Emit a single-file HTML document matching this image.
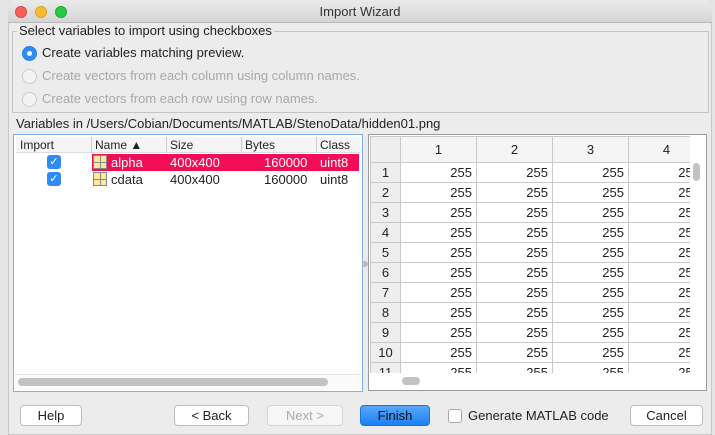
<!DOCTYPE html>
<html><head><style>
*{box-sizing:border-box;margin:0;padding:0}
body{width:715px;height:435px;background:#e4e4e4;font-family:"Liberation Sans",sans-serif;font-size:13px;color:#222;position:relative;overflow:hidden}
.abs{position:absolute}
.win{left:8px;top:0;width:704px;height:435px;background:#ececec;border:1px solid #c8c8c8;border-radius:5px 5px 0 0}
.title{left:8px;top:0;width:704px;height:23px;background:linear-gradient(#ebebeb,#d5d5d5);border-bottom:1px solid #b8b8b8;border-radius:5px 5px 0 0;text-align:center;line-height:23px;font-size:13px;color:#333}
.dot{width:12px;height:12px;border-radius:50%;top:6px}
.radio{width:15px;height:15px;border-radius:50%;border:1px solid #ccc;background:#f3f3f3;left:22px}
.rt{left:42px;font-size:13px}
.btn{height:21px;top:405px;background:#fff;border:1px solid #bdbdbd;border-radius:4px;text-align:center;line-height:19px;font-size:13px}
.cb{width:14px;height:14px;border-radius:3px;background:#2f8cf5;color:#fff;font-size:11px;text-align:center;line-height:14px;left:47px}
.grid{width:14px;height:14px;border:1px solid #888;background:linear-gradient(90deg,transparent 6px,#888 6px,#888 7px,transparent 7px),linear-gradient(transparent 6px,#888 6px,#888 7px,transparent 7px),#fbe99a;left:93px}
table{border-collapse:collapse;table-layout:fixed;width:334px}
td{border:1px solid #c9c9c9;height:20px;font-size:13px;text-align:right;padding-right:4px;width:76px;overflow:hidden;white-space:nowrap}
td.h{background:#eeeeee;text-align:center;width:30px;padding:0}
</style></head><body>
<div class="abs win"></div>
<div class="abs title">Import Wizard</div>
<div class="abs dot" style="left:15px;background:#fc5f57;border:1px solid #e0443e"></div>
<div class="abs dot" style="left:35px;background:#fdbc2e;border:1px solid #dea123"></div>
<div class="abs dot" style="left:55px;background:#28c840;border:1px solid #1aab29"></div>

<div class="abs" style="left:12px;top:31px;width:697px;height:82px;border:1px solid #c4c4c4"></div>
<div class="abs" style="left:17px;top:23px;background:#ececec;padding:0 2px;font-size:13px">Select variables to import using checkboxes</div>
<div class="abs radio" style="top:46px;background:#2f8cf5;border-color:#2a7fe0"><div class="abs" style="left:4px;top:4px;width:5px;height:5px;border-radius:50%;background:#fff"></div></div>
<div class="abs rt" style="top:45px">Create variables matching preview.</div>
<div class="abs radio" style="top:69px"></div>
<div class="abs rt" style="top:68px;color:#a8a8a8">Create vectors from each column using column names.</div>
<div class="abs radio" style="top:92px"></div>
<div class="abs rt" style="top:91px;color:#a8a8a8">Create vectors from each row using row names.</div>

<div class="abs" style="left:16px;top:116px;font-size:13px">Variables in /Users/Cobian/Documents/MATLAB/StenoData/hidden01.png</div>

<div class="abs" style="left:13px;top:134px;width:350px;height:258px;border:1px solid #7fb0e8;background:#fff"></div>
<div class="abs" style="left:16px;top:137px;width:344px;height:16px;background:#f5f5f5;border-bottom:1px solid #ddd;font-size:12px">
<span class="abs" style="left:4px;top:1px">Import</span>
<span class="abs" style="left:75px;top:0;height:15px;border-left:1px solid #ccc"></span>
<span class="abs" style="left:79px;top:1px">Name ▲</span>
<span class="abs" style="left:150px;top:0;height:15px;border-left:1px solid #ccc"></span>
<span class="abs" style="left:154px;top:1px">Size</span>
<span class="abs" style="left:225px;top:0;height:15px;border-left:1px solid #ccc"></span>
<span class="abs" style="left:229px;top:1px">Bytes</span>
<span class="abs" style="left:300px;top:0;height:15px;border-left:1px solid #ccc"></span>
<span class="abs" style="left:304px;top:1px">Class</span>
</div>
<div class="abs" style="left:92px;top:154px;width:267px;height:17px;background:#f20d57"></div>
<div class="abs cb" style="top:155px">✓</div>
<div class="abs cb" style="top:172px">✓</div>
<div class="abs grid" style="top:155px"></div>
<div class="abs grid" style="top:172px"></div>
<div class="abs" style="left:111px;top:155px;color:#fff">alpha</div>
<div class="abs" style="left:170px;top:155px;color:#fff">400x400</div>
<div class="abs" style="left:264px;top:155px;color:#fff">160000</div>
<div class="abs" style="left:320px;top:155px;color:#fff">uint8</div>
<div class="abs" style="left:111px;top:172px">cdata</div>
<div class="abs" style="left:170px;top:172px">400x400</div>
<div class="abs" style="left:264px;top:172px">160000</div>
<div class="abs" style="left:320px;top:172px">uint8</div>
<div class="abs" style="left:15px;top:374px;width:346px;height:16px;background:#fafafa;border-top:1px solid #e4e4e4"></div>
<div class="abs" style="left:18px;top:378px;width:310px;height:8px;border-radius:4px;background:#c2c2c2"></div>

<div class="abs" style="left:362px;top:261px;width:6px;height:6px;border-radius:50%;background:#bbb"></div>

<div class="abs" style="left:368px;top:134px;width:339px;height:257px;border:1px solid #9a9a9a;background:#fff;overflow:hidden">
<div class="abs" style="left:1px;top:1px;width:320px;overflow:hidden;height:237px">
<table style="position:absolute;left:0;top:0">
<tr style="background:#f5f5f5"><td class="h" style="height:26px"></td><td style="text-align:center;height:26px;padding:0">1</td><td style="text-align:center;padding:0">2</td><td style="text-align:center;padding:0">3</td><td style="text-align:center;padding:0">4</td></tr>
<tr><td class="h">1</td><td>255</td><td>255</td><td>255</td><td>255</td></tr>
<tr><td class="h">2</td><td>255</td><td>255</td><td>255</td><td>255</td></tr>
<tr><td class="h">3</td><td>255</td><td>255</td><td>255</td><td>255</td></tr>
<tr><td class="h">4</td><td>255</td><td>255</td><td>255</td><td>255</td></tr>
<tr><td class="h">5</td><td>255</td><td>255</td><td>255</td><td>255</td></tr>
<tr><td class="h">6</td><td>255</td><td>255</td><td>255</td><td>255</td></tr>
<tr><td class="h">7</td><td>255</td><td>255</td><td>255</td><td>255</td></tr>
<tr><td class="h">8</td><td>255</td><td>255</td><td>255</td><td>255</td></tr>
<tr><td class="h">9</td><td>255</td><td>255</td><td>255</td><td>255</td></tr>
<tr><td class="h">10</td><td>255</td><td>255</td><td>255</td><td>255</td></tr>
<tr><td class="h">11</td><td>255</td><td>255</td><td>255</td><td>255</td></tr>
</table></div>
<div class="abs" style="left:324px;top:28px;width:7px;height:18px;border-radius:4px;background:#c2c2c2"></div>
<div class="abs" style="left:33px;top:242px;width:18px;height:8px;border-radius:4px;background:#c2c2c2"></div>
</div>

<div class="abs btn" style="left:20px;width:62px">Help</div>
<div class="abs btn" style="left:174px;width:75px">&lt; Back</div>
<div class="abs btn" style="left:267px;width:76px;color:#aaa;background:#f6f6f6;border-color:#d4d4d4">Next &gt;</div>
<div class="abs btn" style="left:360px;width:70px;background:linear-gradient(#5aa8fc,#1a7ff5);border-color:#1f73d6;color:#111">Finish</div>
<div class="abs" style="left:448px;top:409px;width:14px;height:14px;border:1px solid #aaa;border-radius:3px;background:#fff"></div>
<div class="abs" style="left:468px;top:408px">Generate MATLAB code</div>
<div class="abs btn" style="left:630px;width:73px">Cancel</div>
</body></html>
